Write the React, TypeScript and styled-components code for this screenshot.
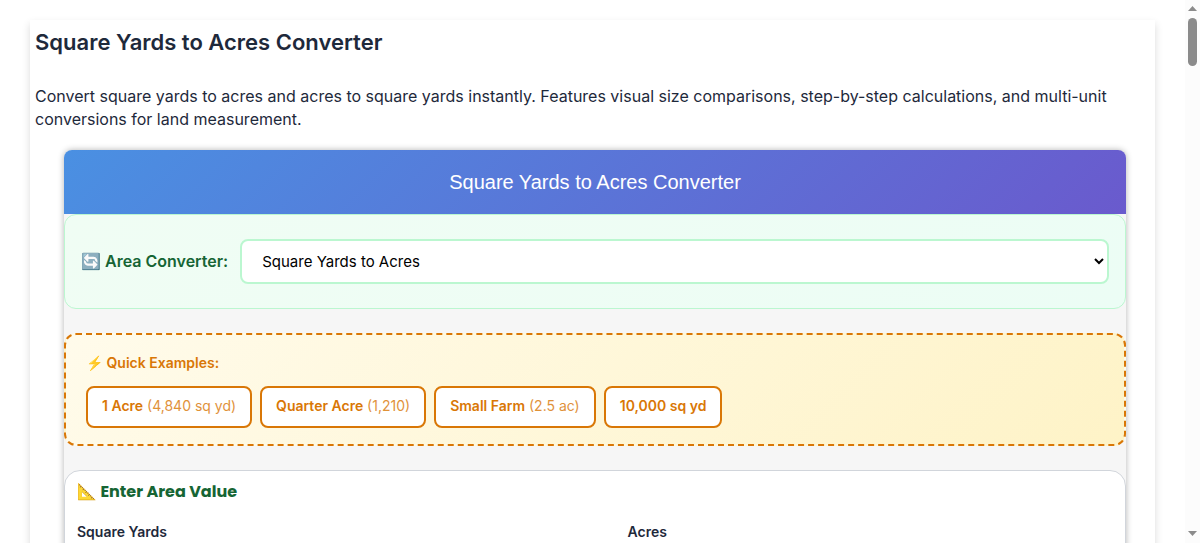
import React, { useState } from "react";
import styled, { createGlobalStyle } from "styled-components";

const GlobalStyle = createGlobalStyle`
  *, *::before, *::after { box-sizing: border-box; }
  html, body { margin: 0; padding: 0; background: #fff; overflow: hidden; }
  body { font-family: Inter, "Liberation Sans", sans-serif; color: #1e293b; }
  h1, h2, h3, p { margin: 0; }
`;

const Viewport = styled.div`
  display: grid;
  grid-template-columns: minmax(0, 1fr) 15px;
  height: 100vh;
`;

const Page = styled.div`
  min-height: 0;
  overflow: hidden;
  padding: 20px 30px 0;
`;

const Article = styled.main`
  padding: 5px 0 24px 5px;
  background: #fff;
  box-shadow: 0 4px 8px rgba(0, 0, 0, 0.15);
`;

const Title = styled.h1`
  font-size: 22px;
  font-weight: 600;
  line-height: 34px;
`;

const Intro = styled.p`
  margin-top: 26px;
  font-size: 16px;
  line-height: 23px;
`;

const Calculator = styled.section`
  margin: 19px 29px 0;
  background: #f6f6f6;
  border-radius: 8px;
  box-shadow: 0 0 6px rgba(0, 0, 0, 0.3);
`;

const Banner = styled.h2`
  padding: 16px;
  border-radius: 8px 8px 0 0;
  background: linear-gradient(135deg, #4a90e2, #6a5acd);
  color: #fff;
  font: 400 20px/32px "Liberation Sans", Arial, sans-serif;
  text-align: center;
`;

const ModePanel = styled.div`
  display: flex;
  align-items: center;
  gap: 12px;
  padding: 24px 16px;
  border: 1px solid #bbf7d0;
  border-radius: 12px;
  background: linear-gradient(135deg, #f0fdf4, #ecfdf5);
`;

const ModeLabel = styled.label`
  padding-bottom: 2px;
  color: #166534;
  font-size: 16px;
  font-weight: 600;
  white-space: nowrap;
`;

const ModeSelect = styled.select`
  flex: 1;
  min-width: 0;
  height: 45px;
  padding: 0 0 0 16px;
  border: 2px solid #bbf7d0;
  border-radius: 8px;
  background: #fff;
  color: #000;
  font: 400 15px Inter, sans-serif;
`;

const Examples = styled.div`
  display: flex;
  flex-direction: column;
  gap: 12px;
  margin: 24px 0;
  padding: 16px 20px;
  border: 2px dashed #d97706;
  border-radius: 12px;
  background: linear-gradient(135deg, #fffbeb, #fef3c7);
`;

const ExamplesTitle = styled.h3`
  color: #d97706;
  font-size: 14px;
  font-weight: 600;
  line-height: 23px;
`;

const ExampleRow = styled.div`
  display: flex;
  flex-wrap: wrap;
  gap: 8px;
`;

const ExampleButton = styled.button`
  height: 42px;
  padding: 0 14px 4px;
  border: 2px solid #d97706;
  border-radius: 8px;
  background: #fff;
  color: #d97706;
  font: 600 14px Inter, sans-serif;
  cursor: pointer;
`;

const Detail = styled.span`
  font-weight: 400;
  opacity: 0.8;
`;

const InputCard = styled.div`
  padding: 8px 12px 24px;
  border: 1px solid #d1d5db;
  border-radius: 16px;
  background: #fff;
`;

const CardTitle = styled.h3`
  color: #166534;
  font: 700 16px/26px Poppins, Inter, sans-serif;
`;

const Fields = styled.div`
  display: grid;
  grid-template-columns: 1fr 1fr;
  gap: 65px;
  margin-top: 16px;
`;

const Field = styled.label`
  display: flex;
  flex-direction: column;
  gap: 8px;
  font-size: 14px;
  font-weight: 600;
  line-height: 22px;
`;

const NumberInput = styled.input`
  height: 44px;
  padding: 0 16px;
  border: 2px solid #d1d5db;
  border-radius: 8px;
  font: 400 16px Inter, sans-serif;
`;

const ScrollTrack = styled.div`
  display: flex;
  flex-direction: column;
  align-items: center;
  justify-content: space-between;
  padding: 6px 0 7px;
  background: #fcfcfc;
`;

const ScrollTop = styled.div`
  display: flex;
  flex-direction: column;
  align-items: center;
  gap: 7px;
`;

const ScrollThumb = styled.div`
  width: 9px;
  height: 48px;
  border-radius: 5px;
  background: #8b8b8b;
`;

const Arrow = ({ down = false }: { down?: boolean }) => (
  <svg width="9" height="5" viewBox="0 0 9 5" aria-hidden="true">
    <path d={down ? "M0 0h9L4.500 5z" : "M0 5h9L4.500 0z"} fill="#8b8b8b" />
  </svg>
);

const examples = [
  { name: "1 Acre", detail: "(4,840 sq yd)", yards: 4840 },
  { name: "Quarter Acre", detail: "(1,210)", yards: 1210 },
  { name: "Small Farm", detail: "(2.5 ac)", yards: 12100 },
  { name: "10,000 sq yd", detail: "", yards: 10000 },
];

export default function App() {
  const [mode, setMode] = useState("yards");
  const [yards, setYards] = useState("");
  const acres = yards ? String(Number(yards) / 4840) : "";

  return (
    <>
      <GlobalStyle />
      <Viewport>
        <Page>
          <Article>
            <Title>Square Yards to Acres Converter</Title>
            <Intro>
              Convert square yards to acres and acres to square yards instantly. Features visual
              size comparisons, step-by-step calculations, and multi-unit conversions for land
              measurement.
            </Intro>
            <Calculator>
              <Banner>Square Yards to Acres Converter</Banner>
              <ModePanel>
                <ModeLabel htmlFor="mode">🔄 Area Converter:</ModeLabel>
                <ModeSelect id="mode" value={mode} onChange={(e) => setMode(e.target.value)}>
                  <option value="yards">Square Yards to Acres</option>
                  <option value="acres">Acres to Square Yards</option>
                </ModeSelect>
              </ModePanel>
              <Examples>
                <ExamplesTitle>⚡ Quick Examples:</ExamplesTitle>
                <ExampleRow>
                  {examples.map((item) => (
                    <ExampleButton
                      key={item.name}
                      type="button"
                      onClick={() => setYards(String(item.yards))}
                    >
                      {item.name}
                      {item.detail && <Detail> {item.detail}</Detail>}
                    </ExampleButton>
                  ))}
                </ExampleRow>
              </Examples>
              <InputCard>
                <CardTitle>📐 Enter Area Value</CardTitle>
                <Fields>
                  <Field>
                    Square Yards
                    <NumberInput
                      type="number"
                      value={yards}
                      onChange={(e) => setYards(e.target.value)}
                    />
                  </Field>
                  <Field>
                    Acres
                    <NumberInput
                      type="number"
                      value={acres}
                      onChange={(e) => setYards(String(Number(e.target.value) * 4840))}
                    />
                  </Field>
                </Fields>
              </InputCard>
            </Calculator>
          </Article>
        </Page>
        <ScrollTrack aria-hidden="true">
          <ScrollTop>
            <Arrow />
            <ScrollThumb />
          </ScrollTop>
          <Arrow down />
        </ScrollTrack>
      </Viewport>
    </>
  );
}
